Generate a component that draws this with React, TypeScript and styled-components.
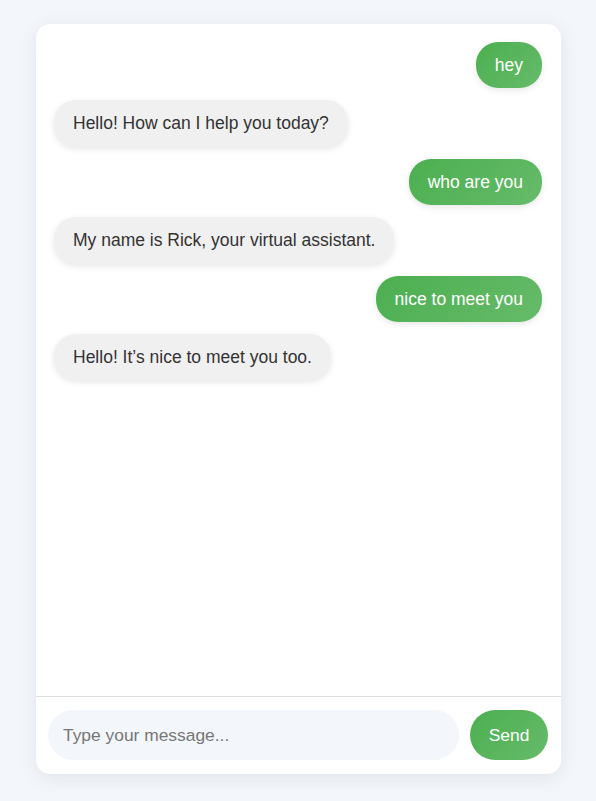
import React from 'react';
import styled, { createGlobalStyle } from 'styled-components';

const GlobalStyle = createGlobalStyle`
  * { box-sizing: border-box; }
  html, body {
    margin: 0;
    padding: 0;
    background: #f3f6fa;
    font-family: 'Liberation Sans', Arial, sans-serif;
  }
`;

const Page = styled.div`
  padding: 24px 35px 27px 36px;
`;

const ChatCard = styled.div`
  height: 750px;
  background: #ffffff;
  border-radius: 14px;
  box-shadow: 0 4px 20px rgba(0, 0, 0, 0.08);
  display: flex;
  flex-direction: column;
  overflow: hidden;
`;

const MessageList = styled.div`
  flex: 1;
  padding: 18px 19px 18px 18px;
  display: flex;
  flex-direction: column;
  gap: 12px;
  overflow-y: auto;
`;

const Bubble = styled.div<{ $fromUser: boolean }>`
  align-self: ${p => (p.$fromUser ? 'flex-end' : 'flex-start')};
  max-width: 75%;
  padding: 12px 19px;
  border-radius: 22px;
  font-size: 17.5px;
  line-height: 22.4px;
  color: ${p => (p.$fromUser ? '#ffffff' : '#333333')};
  background: ${p =>
    p.$fromUser ? 'linear-gradient(135deg, #4caf50 0%, #66bb6a 100%)' : '#f0f0f0'};
  box-shadow: 0 2px 6px rgba(0, 0, 0, 0.1);
`;

const InputBar = styled.form`
  display: flex;
  align-items: center;
  gap: 11px;
  padding: 13px 13px 14px 12px;
  border-top: 1px solid #dddddd;
`;

const MessageInput = styled.input`
  flex: 1;
  height: 50px;
  border: none;
  outline: none;
  border-radius: 25px;
  background: #f3f6fa;
  padding: 0 15px;
  font-family: 'Liberation Sans', Arial, sans-serif;
  font-size: 17.4px;
  color: #333;

  &::placeholder {
    color: #777;
  }
`;

const SendButton = styled.button`
  width: 78px;
  height: 50px;
  border: none;
  border-radius: 25px;
  background: linear-gradient(135deg, #4caf50 0%, #66bb6a 100%);
  color: #ffffff;
  font-family: 'Liberation Sans', Arial, sans-serif;
  font-size: 17.4px;
  cursor: pointer;
`;

const messages = [
  { fromUser: true, text: 'hey' },
  { fromUser: false, text: 'Hello! How can I help you today?' },
  { fromUser: true, text: 'who are you' },
  { fromUser: false, text: 'My name is Rick, your virtual assistant.' },
  { fromUser: true, text: 'nice to meet you' },
  { fromUser: false, text: 'Hello! It\u2019s nice to meet you too.' },
];

const App: React.FC = () => {
  return (
    <>
      <GlobalStyle />
      <Page>
        <ChatCard>
          <MessageList>
            {messages.map((m, i) => (
              <Bubble key={i} $fromUser={m.fromUser}>
                {m.text}
              </Bubble>
            ))}
          </MessageList>
          <InputBar onSubmit={e => e.preventDefault()}>
            <MessageInput placeholder="Type your message..." />
            <SendButton type="submit">Send</SendButton>
          </InputBar>
        </ChatCard>
      </Page>
    </>
  );
};

export default App;
